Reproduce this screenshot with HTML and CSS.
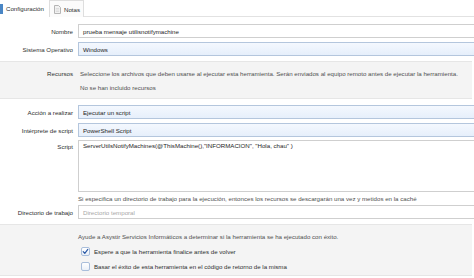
FILE: index.html
```html
<!DOCTYPE html>
<html lang="es">
<head>
<meta charset="utf-8">
<link rel="stylesheet" href="styles.css">
</head>
<body>
<div class="page">
  <div class="tabs">
    <div class="tab active"><span class="tab-mark"></span>Configuración</div>
    <div class="tab">
      <svg class="doc" width="7" height="9" viewBox="0 0 7 9"><path d="M0.5 0.5h4l2 2v6h-6z" fill="#f2f2f2" stroke="#b5b5b5"/><path d="M1.8 3.5h3.4M1.8 5h3.4M1.8 6.5h3.4" stroke="#cfcfcf" stroke-width="0.6"/></svg>
      Notas
    </div>
  </div>

  <div class="form top">
    <label class="lbl">Nombre</label>
    <div class="field input">prueba mensaje utilisnotifymachine</div>
    <label class="lbl">Sistema Operativo</label>
    <div class="field select">Windows</div>
  </div>

  <div class="band res">
    <div class="form">
      <label class="lbl">Recursos</label>
      <div class="note">Seleccione los archivos que deben usarse al ejecutar esta herramienta. Serán enviados al equipo remoto antes de ejecutar la herramienta.</div>
      <div></div>
      <div class="note">No se han incluido recursos</div>
    </div>
  </div>

  <div class="form mid">
    <label class="lbl">Acción a realizar</label>
    <div class="field select">Ejecutar un script</div>
    <label class="lbl">Intérprete de script</label>
    <div class="field select">PowerShell Script</div>
    <label class="lbl lbl-top">Script</label>
    <div class="field textarea">ServerUtilsNotifyMachines(@ThisMachine(),"INFORMACION", "Hola, chau" )</div>
    <div></div>
    <div class="note hint">Si especifica un directorio de trabajo para la ejecución, entonces los recursos se descargarán una vez y metidos en la caché</div>
    <label class="lbl">Directorio de trabajo</label>
    <div class="field input placeholder">Directorio temporal</div>
  </div>

  <div class="band opts">
    <div class="form">
      <div></div>
      <div class="note">Ayude a Asystir Servicios Informáticos a determinar si la herramienta se ha ejecutado con éxito.</div>
      <div></div>
      <div class="check-row"><span class="cb checked"><svg width="7" height="7" viewBox="0 0 7 7"><path d="M1.2 3.6l1.6 1.7 3-3.9" fill="none" stroke="#2b5aa6" stroke-width="1.2" stroke-linecap="round" stroke-linejoin="round"/></svg></span>Espere a que la herramienta finalice antes de volver</div>
      <div></div>
      <div class="check-row"><span class="cb"></span>Basar el éxito de esta herramienta en el código de retorno de la misma</div>
    </div>
  </div>
</div>
</body>
</html>
```

FILE: styles.css
```css
* { box-sizing: border-box; }
html, body { margin: 0; padding: 0; background: #ffffff; }
body {
  font-family: "Liberation Sans", Arial, sans-serif;
  font-size: 6.15px;
  color: #2e2e2e;
  width: 474px;
  height: 278px;
  overflow: hidden;
}
.page { width: 474px; }

.tabs {
  display: flex;
  height: 17px;
  border-bottom: 1px solid #e2e2e2;
  background: #ffffff;
}
.tab {
  display: flex;
  align-items: center;
  gap: 3px;
  color: #2e2e2e;
  height: 17px;
}
.tab.active {
  padding-left: 0;
  width: 49px;
  background: #fff;
  gap: 3px;
}
.tab-mark {
  display: block;
  width: 3px;
  height: 10px;
  background: #4a86c5;
}
.tab:not(.active) {
  border: 1px solid #dedede;
  border-bottom: none;
  background: #fbfbfb;
  width: 35px;
  padding-left: 4px;
}
.doc { display: block; }

.form {
  display: grid;
  grid-template-columns: 73px 1fr;
  column-gap: 5px;
  align-items: center;
}
.form.top { padding-top: 7px; row-gap: 4px; }
.lbl {
  text-align: right;
  color: #2e2e2e;
  white-space: nowrap;
}
.lbl-top { align-self: start; padding-top: 2px; }

.field {
  height: 14px;
  display: flex;
  align-items: center;
  padding-left: 4px;
  white-space: nowrap;
  overflow: hidden;
  color: #1e1e1e;
  margin-right: -2px;
}
.input {
  border: 1px solid #cfcfcf;
  background: #ffffff;
}
.placeholder { color: #a8a8a8; }
.select {
  border: 1px solid #b4c6dd;
  background: linear-gradient(#f4f8fe, #e6effb);
}
.textarea {
  height: 52px;
  align-items: flex-start;
  padding-top: 1px;
  border: 1px solid #cfcfcf;
  background: #fff;
}

.band {
  background: #f4f4f4;
  border-top: 1px solid #e6e6e6;
  border-bottom: 1px solid #e6e6e6;
  margin-right: 2px;
}
.band .form { row-gap: 0; }
.band .form > * { line-height: 14px; }
.res { margin-top: 5px; padding: 5px 0 3px; }
.res .form { column-gap: 7px; }
.note { color: #505050; white-space: nowrap; }

.form.mid { padding-top: 6px; row-gap: 4px; padding-bottom: 5px; }
.form.mid .textarea { margin-top: -1px; }
.hint { line-height: 10px; margin: -2px 0 -3px; }

.opts { padding: 5px 0 1px; }
.check-row {
  display: flex;
  align-items: center;
  gap: 4px;
  padding-left: 3px;
  height: 15px;
  color: #2e2e2e;
}
.cb {
  width: 9px;
  height: 9px;
  border: 1px solid #a9bedb;
  border-radius: 2px;
  background: linear-gradient(#ffffff, #eaf0f8);
  display: flex;
  align-items: center;
  justify-content: center;
}
.cb svg { display: block; }
```
